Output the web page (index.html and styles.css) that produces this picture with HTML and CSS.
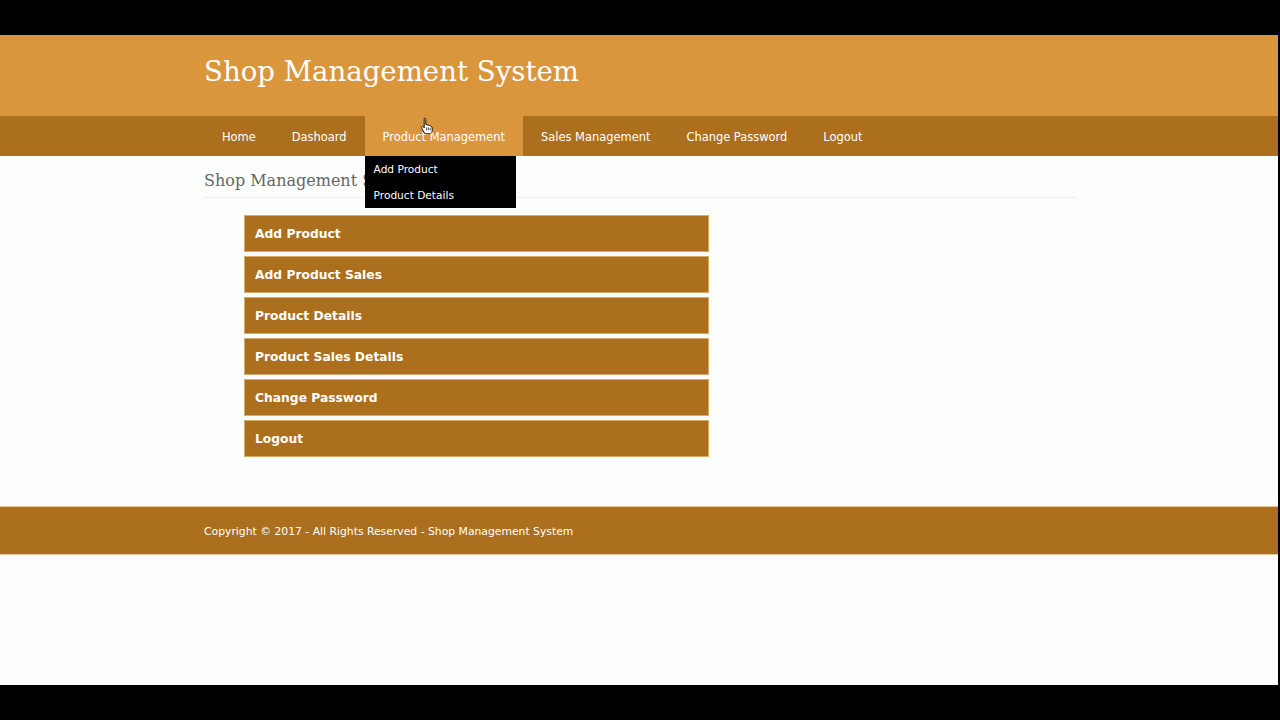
FILE: index.html
```html
<!DOCTYPE html>
<html>
<head>
<meta charset="utf-8">
<title>Shop Management System</title>
<link rel="stylesheet" href="styles.css">
</head>
<body>
<div class="screen">
  <header class="header">
    <div class="container">
      <h1 class="title">Shop Management System</h1>
    </div>
  </header>
  <nav class="nav">
    <div class="container">
      <ul class="menu">
        <li class="menu-item"><a href="#">Home</a></li>
        <li class="menu-item"><a href="#">Dashoard</a></li>
        <li class="menu-item active"><a href="#">Product Management</a>
          <svg class="cursor" width="14" height="17" viewBox="0 0 14 17" aria-hidden="true">
            <path d="M4.5 1.2c.8 0 1.3.5 1.3 1.3v5.2l.3-.1c.6-.3 1.3 0 1.5.5.6-.4 1.4-.2 1.7.4.6-.3 1.4 0 1.6.7l.1.4c.7 0 1.2.5 1.2 1.2v2.6c0 1.6-.7 2.8-1.6 3.4H4.9L1.6 11.2c-.4-.6-.2-1.3.4-1.6.5-.3 1.1-.1 1.4.3l.8 1V2.5c0-.8.5-1.3.3-1.3z" fill="#fff" stroke="#000" stroke-width="0.9" stroke-linejoin="round"/>
            <path d="M6.6 10.5v2.8M8.4 10.5v2.8M10.2 10.8v2.5" stroke="#000" stroke-width="0.7"/>
          </svg>
          <ul class="dropdown">
            <li><a href="#">Add Product</a></li>
            <li><a href="#">Product Details</a></li>
          </ul>
        </li>
        <li class="menu-item"><a href="#">Sales Management</a></li>
        <li class="menu-item"><a href="#">Change Password</a></li>
        <li class="menu-item"><a href="#">Logout</a></li>
      </ul>
    </div>
  </nav>
  <main class="main">
    <div class="container">
      <h2 class="page-title">Shop Management System</h2>
      <div class="actions">
        <a class="action" href="#">Add Product</a>
        <a class="action" href="#">Add Product Sales</a>
        <a class="action" href="#">Product Details</a>
        <a class="action" href="#">Product Sales Details</a>
        <a class="action" href="#">Change Password</a>
        <a class="action" href="#">Logout</a>
      </div>
    </div>
  </main>
  <footer class="footer">
    <div class="container">
      <p class="copy">Copyright © 2017 - All Rights Reserved - Shop Management System</p>
    </div>
  </footer>
</div>
</body>
</html>
```
FILE: styles.css
```css
html, body {
  margin: 0;
  padding: 0;
  background: #000;
  height: 720px;
  overflow: hidden;
}
.screen {
  margin-top: 35px;
  width: 1278px;
  height: 650px;
  background: #fcfefc;
  font-family: "DejaVu Sans", Verdana, sans-serif;
}
.container {
  width: 872px;
  margin: 0 auto;
  position: relative;
  left: 1px;
}
.header {
  background: #da963c;
  height: 81px;
}
.title {
  margin: 0;
  padding-top: 17px;
  font-family: "DejaVu Serif", Georgia, serif;
  font-weight: normal;
  font-size: 27.6px;
  line-height: 40px;
  color: #fff;
}
.nav {
  background: #ac6f1d;
  height: 40px;
}
.menu {
  list-style: none;
  margin: 0;
  padding: 0;
  display: flex;
}
.menu-item {
  position: relative;
}
.menu-item > a {
  display: block;
  padding: 2px 18px 0;
  height: 38px;
  line-height: 38px;
  font-size: 11.45px;
  color: #fff;
  text-decoration: none;
}
.menu-item.active > a {
  background: #da963c;
}
.cursor {
  position: absolute;
  left: 55px;
  top: 1px;
  z-index: 6;
}
.dropdown {
  position: absolute;
  top: 40px;
  left: 0;
  width: 151px;
  margin: 0;
  padding: 0;
  list-style: none;
  background: #000;
  z-index: 5;
}
.dropdown a {
  display: block;
  height: 26px;
  line-height: 26px;
  padding-left: 9px;
  font-size: 10.6px;
  color: #fff;
  text-decoration: none;
}
.main {
  height: 350px;
}
.page-title {
  margin: 0;
  padding-top: 15px;
  padding-bottom: 7px;
  font-family: "DejaVu Serif", Georgia, serif;
  font-weight: normal;
  font-size: 16px;
  line-height: 19px;
  color: #666;
  border-bottom: 1px solid #eceeec;
}
.actions {
  margin: 17px 0 0 40px;
  width: 465px;
  display: flex;
  flex-direction: column;
  gap: 4px;
}
.action {
  display: block;
  height: 34px;
  padding-top: 1px;
  line-height: 35px;
  padding-left: 10px;
  background: #ac6f1d;
  border: 1px solid #d7a867;
  color: #fff;
  font-weight: bold;
  font-size: 12.3px;
  text-decoration: none;
}
.footer {
  background: #ac6f1d;
  height: 47px;
  border-top: 1px solid #e8c592;
  border-bottom: 1px solid #e8c592;
}
.copy {
  margin: 0;
  padding-top: 1px;
  line-height: 47px;
  font-size: 10.8px;
  color: #fff;
}
```
